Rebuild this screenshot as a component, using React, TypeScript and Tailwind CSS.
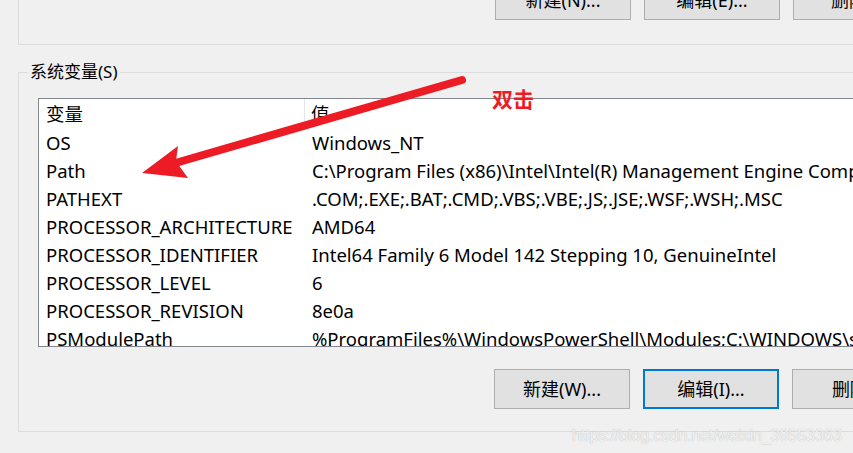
import React from 'react';

const FONT = { fontFamily: '"Segoe UI", "Noto Sans", "Noto Sans CJK SC", sans-serif' };

const ROWS: [string, string][] = [
  ['OS', 'Windows_NT'],
  ['Path', 'C:\\Program Files (x86)\\Intel\\Intel(R) Management Engine Components\\iCLS\\'],
  ['PATHEXT', '.COM;.EXE;.BAT;.CMD;.VBS;.VBE;.JS;.JSE;.WSF;.WSH;.MSC'],
  ['PROCESSOR_ARCHITECTURE', 'AMD64'],
  ['PROCESSOR_IDENTIFIER', 'Intel64 Family 6 Model 142 Stepping 10, GenuineIntel'],
  ['PROCESSOR_LEVEL', '6'],
  ['PROCESSOR_REVISION', '8e0a'],
  ['PSModulePath', '%ProgramFiles%\\WindowsPowerShell\\Modules;C:\\WINDOWS\\system32\\'],
];

const WinButton: React.FC<{ label: string; focused?: boolean }> = ({ label, focused }) => (
  <button
    type="button"
    className={`h-[40px] w-[136px] shrink-0 bg-[#e1e1e1] text-[18px] text-black ${
      focused ? 'border-2 border-[#0078d7]' : 'border border-[#adadad]'
    }`}
  >
    {label}
  </button>
);

export default function App() {
  return (
    <div
      className="relative h-[453px] w-[853px] overflow-hidden bg-[#f0f0f0] text-black"
      style={FONT}
    >
      <div className="w-[1100px] pl-[18px]">
        {/* User variables group (bottom edge only) */}
        <div className="flex h-[45px] items-start border-b border-l border-[#dcdcdc] pl-[476px]">
          <div className="-mt-[20px] flex gap-[13px]">
            <WinButton label="新建(N)..." />
            <WinButton label="编辑(E)..." />
            <WinButton label="删除(D)" />
          </div>
        </div>

        {/* System variables group */}
        <fieldset className="mt-[17px] h-[370px] border border-[#dcdcdc] px-[19px] pb-0">
          <legend className="ml-[-10px] px-[2px] text-[17px] leading-[20px]">系统变量(S)</legend>

          <div className="mt-[16px] h-[249px] overflow-hidden border border-[#828790] bg-white text-[18.5px]">
            <div className="flex h-[30px] items-center">
              <div className="flex h-full w-[266px] items-center border-r border-[#e5e5e5] pl-[7px]">
                变量
              </div>
              <div className="pl-[6px]">值</div>
            </div>
            {ROWS.map(([name, value]) => (
              <div key={name} className="flex h-[28px] items-center whitespace-nowrap">
                <div className="w-[267px] pl-[7px]">{name}</div>
                <div className="pl-[6px]">{value}</div>
              </div>
            ))}
          </div>

          <div className="mt-[22px] flex gap-[13px] pl-[456px]">
            <WinButton label="新建(W)..." />
            <WinButton label="编辑(I)..." focused />
            <WinButton label="删除(L)" />
          </div>
        </fieldset>
      </div>

      {/* Annotation arrow */}
      <svg className="pointer-events-none absolute left-0 top-0" width="853" height="453">
        <line x1="462" y1="80" x2="172" y2="164" stroke="#ed1c24" strokeWidth="8" strokeLinecap="round" />
        <polygon points="142,173 178,146 176,161 180,167 188,178" fill="#ed1c24" />
      </svg>
      <div className="absolute left-[492px] top-[84px] text-[21px] font-bold text-[#ed1c24]">
        双击
      </div>

      {/* Watermark */}
      <div
        className="absolute left-[572px] top-[423px] text-[16.5px] tracking-[-0.3px] text-white/80"
        style={{ textShadow: '0 0 1px #a8a8a8', fontFamily: '"Liberation Sans", sans-serif' }}
      >
        https://blog.csdn.net/weixin_39553363
      </div>
    </div>
  );
}
